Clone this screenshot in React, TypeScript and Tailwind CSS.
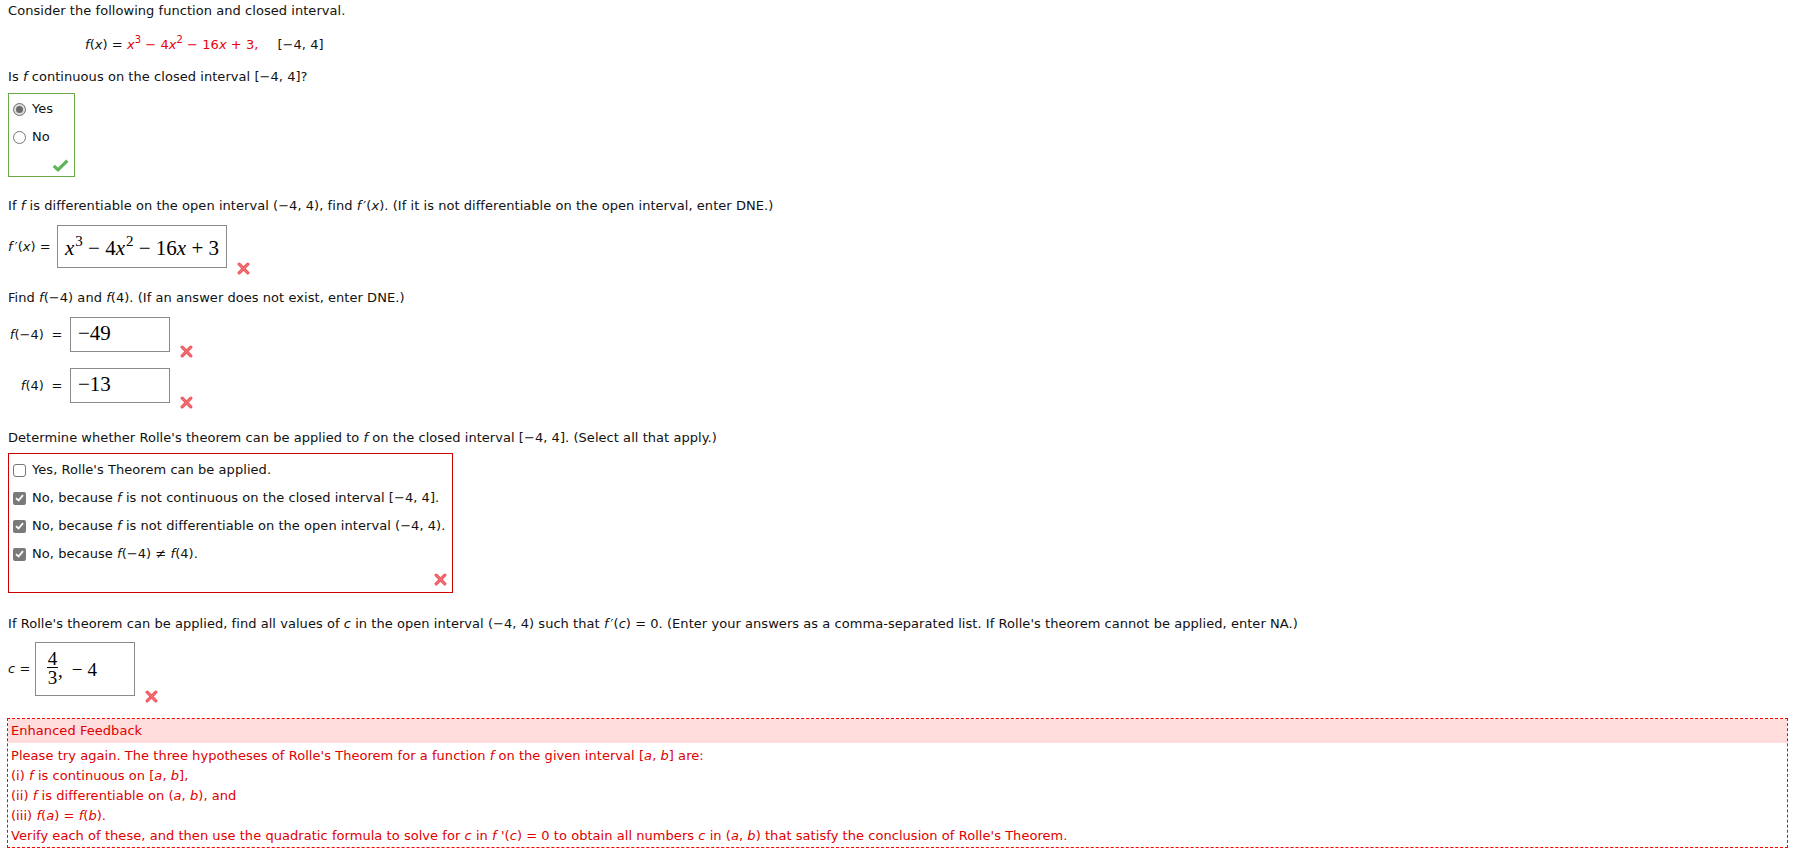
import React from 'react';

const I = ({ children }: { children: React.ReactNode }) => <i className="italic">{children}</i>;

const Prime = () => <span className="ml-[2px]">′</span>;

const Sup = ({ children }: { children: React.ReactNode }) => (
  <span className="relative -top-[6px] text-[10px] leading-none">{children}</span>
);

const MathSup = ({ children }: { children: React.ReactNode }) => (
  <span className="relative -top-[9px] ml-px text-[15px] leading-none">{children}</span>
);

function XMark() {
  return (
    <svg width="13" height="13" viewBox="0 0 13 13" className="block">
      <path d="M2.2 2.2 L10.8 10.8 M10.8 2.2 L2.2 10.8" stroke="#ee5a5f" strokeWidth="3.3" strokeLinecap="round" />
      <path d="M2.6 2.6 L10.4 10.4 M10.4 2.6 L2.6 10.4" stroke="#f7999c" strokeWidth="1" strokeLinecap="round" opacity="0.5" />
    </svg>
  );
}

function CheckMark() {
  return (
    <svg width="17" height="13" viewBox="0 0 17 13" className="block">
      <path d="M1.8 6.8 L6 10.8 L15.4 1.6" fill="none" stroke="#5fb45a" strokeWidth="3.2" strokeLinejoin="round" />
    </svg>
  );
}

function Radio({ checked }: { checked?: boolean }) {
  return (
    <span
      className={`flex items-center justify-center w-[13px] h-[13px] rounded-full border shrink-0 ${
        checked ? 'border-[#6e6e6e] bg-[#dcdcdc]' : 'border-[#767676] bg-white'
      }`}
    >
      {checked && <span className="w-[7px] h-[7px] rounded-full bg-[#6b6b6b]" />}
    </span>
  );
}

function Checkbox({ checked }: { checked?: boolean }) {
  if (!checked) {
    return <span className="block w-[13px] h-[13px] rounded-[3px] border border-[#767676] bg-white shrink-0" />;
  }
  return (
    <span className="flex items-center justify-center w-[13px] h-[13px] rounded-[2px] bg-[#7a7a7a] shrink-0">
      <svg width="9" height="8" viewBox="0 0 9 8">
        <path d="M1 4.2 L3.5 6.5 L8 1.2" fill="none" stroke="#fff" strokeWidth="1.8" />
      </svg>
    </span>
  );
}

const rolleOptions: { checked: boolean; text: React.ReactNode }[] = [
  { checked: false, text: <>Yes, Rolle's Theorem can be applied.</> },
  { checked: true, text: <>No, because <I>f</I> is not continuous on the closed interval [−4, 4].</> },
  { checked: true, text: <>No, because <I>f</I> is not differentiable on the open interval (−4, 4).</> },
  { checked: true, text: <>No, because <I>f</I>(−4) ≠ <I>f</I>(4).</> },
];

export default function App() {
  return (
    <div className="min-h-screen bg-white text-[#111] text-[13px] leading-[16px] tracking-[0.05px] font-['DejaVu_Sans',Verdana,sans-serif] pl-[8px] pr-[6px] pt-[3px]">
      <p className="h-[16px]">Consider the following function and closed interval.</p>

      <p className="mt-[18px] h-[16px] pl-[77px] whitespace-nowrap">
        <I>f</I>(<I>x</I>) ={' '}
        <span className="text-[#e8000b]">
          <I>x</I>
          <Sup>3</Sup> − 4<I>x</I>
          <Sup>2</Sup> − 16<I>x</I> + 3,
        </span>
        <span className="ml-[19px]">[−4, 4]</span>
      </p>

      <p className="mt-[16px] h-[16px]">
        Is <I>f</I> continuous on the closed interval [−4, 4]?
      </p>

      <div className="mt-[8px] w-[67px] h-[84px] border border-[#69a84a] pl-[4px] pr-[5px] pt-[7px] flex flex-col">
        <label className="flex items-center gap-[6px] h-[16px]">
          <Radio checked />
          <span>Yes</span>
        </label>
        <label className="mt-[12px] flex items-center gap-[6px] h-[16px]">
          <Radio />
          <span>No</span>
        </label>
        <div className="mt-[14px] self-end">
          <CheckMark />
        </div>
      </div>

      <p className="mt-[21px] h-[16px]">
        If <I>f</I> is differentiable on the open interval (−4, 4), find <I>f</I>
        <Prime />(<I>x</I>). (If it is not differentiable on the open interval, enter DNE.)
      </p>

      <div className="mt-[11px] flex items-center">
        <span className="w-[49px] whitespace-nowrap">
          <I>f</I>
          <Prime />(<I>x</I>) =
        </span>
        <div className="w-[170px] h-[43px] border border-[#8a8a8a] pl-[7px] pt-[10px] font-['Liberation_Serif',serif] text-[21px] leading-[24px] tracking-normal text-black whitespace-nowrap">
          <I>x</I>
          <MathSup>3</MathSup> − 4<I>x</I>
          <MathSup>2</MathSup> − 16<I>x</I> + 3
        </div>
        <div className="ml-[10px] self-end mb-[-7px]">
          <XMark />
        </div>
      </div>

      <p className="mt-[22px] h-[16px]">
        Find <I>f</I>(−4) and <I>f</I>(4). (If an answer does not exist, enter DNE.)
      </p>

      <div className="mt-[11px] flex items-center">
        <span className="w-[36px] text-right whitespace-nowrap">
          <I>f</I>(−4)
        </span>
        <span className="w-[26px] text-center">=</span>
        <div className="w-[100px] h-[35px] border border-[#8a8a8a] pl-[7px] pt-[3px] font-['Liberation_Serif',serif] text-[21px] leading-[24px] tracking-normal text-black">
          −49
        </div>
        <div className="ml-[10px] self-end mb-[-6px]">
          <XMark />
        </div>
      </div>

      <div className="mt-[16px] flex items-center">
        <span className="w-[36px] text-right whitespace-nowrap">
          <I>f</I>(4)
        </span>
        <span className="w-[26px] text-center">=</span>
        <div className="w-[100px] h-[35px] border border-[#8a8a8a] pl-[7px] pt-[3px] font-['Liberation_Serif',serif] text-[21px] leading-[24px] tracking-normal text-black">
          −13
        </div>
        <div className="ml-[10px] self-end mb-[-6px]">
          <XMark />
        </div>
      </div>

      <p className="mt-[27px] h-[16px]">
        Determine whether Rolle's theorem can be applied to <I>f</I> on the closed interval [−4, 4]. (Select all that apply.)
      </p>

      <div className="mt-[7px] w-[445px] h-[140px] border border-[#cc0000] pl-[4px] pr-[5px] pt-[8px] pb-[6px] flex flex-col">
        {rolleOptions.map((o, i) => (
          <label key={i} className={`flex items-center gap-[6px] h-[16px] ${i > 0 ? 'mt-[12px]' : ''}`}>
            <Checkbox checked={o.checked} />
            <span className="whitespace-nowrap">{o.text}</span>
          </label>
        ))}
        <div className="mt-auto self-end">
          <XMark />
        </div>
      </div>

      <p className="mt-[23px] h-[16px] whitespace-nowrap">
        If Rolle's theorem can be applied, find all values of <I>c</I> in the open interval (−4, 4) such that <I>f</I>
        <Prime />(<I>c</I>) = 0. (Enter your answers as a comma-separated list. If Rolle's theorem cannot be applied, enter NA.)
      </p>

      <div className="mt-[10px] flex items-center">
        <span className="w-[27px] whitespace-nowrap">
          <I>c</I> =
        </span>
        <div className="w-[100px] h-[54px] border border-[#8a8a8a] pl-[11px] flex items-center font-['Liberation_Serif',serif] text-[19px] tracking-normal text-black">
          <span className="flex flex-col items-center">
            <span className="leading-[14px] pb-[1px]">4</span>
            <span className="block w-[11px] h-px bg-black" />
            <span className="leading-[16px] pt-[2px]">3</span>
          </span>
          <span className="leading-[19px] relative top-[1px]">,</span>
          <span className="leading-[19px] ml-[9px]">−</span>
          <span className="leading-[19px] ml-[5px]">4</span>
        </div>
        <div className="ml-[10px] self-end mb-[-7px]">
          <XMark />
        </div>
      </div>

      <div className="mt-[22px] -ml-px border border-dashed border-[#ff0000] text-[#e00000]">
        <div className="h-[24px] leading-[24px] bg-[#ffdddd] pl-[3px]">Enhanced Feedback</div>
        <div className="pt-[3px] pb-px pl-[3px] leading-[20px]">
          <p>
            Please try again. The three hypotheses of Rolle's Theorem for a function <I>f</I> on the given interval [<I>a</I>, <I>b</I>] are:
          </p>
          <p>
            (i) <I>f</I> is continuous on [<I>a</I>, <I>b</I>],
          </p>
          <p>
            (ii) <I>f</I> is differentiable on (<I>a</I>, <I>b</I>), and
          </p>
          <p>
            (iii) <I>f</I>(<I>a</I>) = <I>f</I>(<I>b</I>).
          </p>
          <p>
            Verify each of these, and then use the quadratic formula to solve for <I>c</I> in <I>f</I> '(<I>c</I>) = 0 to obtain all numbers <I>c</I> in (<I>a</I>, <I>b</I>) that satisfy the conclusion of Rolle's Theorem.
          </p>
        </div>
      </div>
    </div>
  );
}
